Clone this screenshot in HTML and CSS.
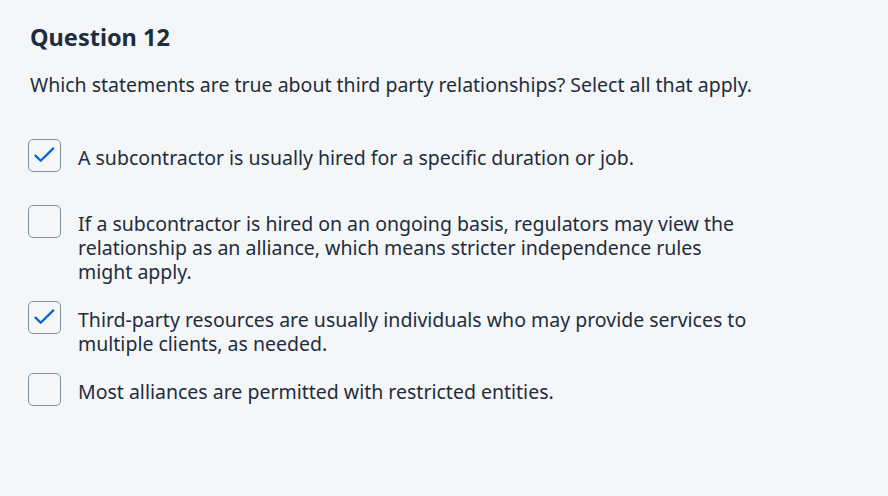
FILE: index.html
```html
<!DOCTYPE html>
<html>
<head>
<meta charset="utf-8">
<link rel="stylesheet" href="styles.css">
</head>
<body>
<main class="question">
  <h1 class="title">Question 12</h1>
  <p class="prompt">Which statements are true about third party relationships? Select all that apply.</p>
  <ul class="options">
    <li class="option">
      <span class="box checked"><svg viewBox="0 0 31 31" width="31" height="31"><path d="M6.5 15.6L11.7 20.8L24.3 8.4" fill="none" stroke="#0064d9" stroke-width="2.2" stroke-linecap="round" stroke-linejoin="round"/></svg></span>
      <span class="label">A subcontractor is usually hired for a specific duration or job.</span>
    </li>
    <li class="option">
      <span class="box"></span>
      <span class="label">If a subcontractor is hired on an ongoing basis, regulators may view the relationship as an alliance, which means stricter independence rules might apply.</span>
    </li>
    <li class="option">
      <span class="box checked"><svg viewBox="0 0 31 31" width="31" height="31"><path d="M6.5 15.6L11.7 20.8L24.3 8.4" fill="none" stroke="#0064d9" stroke-width="2.2" stroke-linecap="round" stroke-linejoin="round"/></svg></span>
      <span class="label">Third-party resources are usually individuals who may provide services to multiple clients, as needed.</span>
    </li>
    <li class="option">
      <span class="box"></span>
      <span class="label">Most alliances are permitted with restricted entities.</span>
    </li>
  </ul>
</main>
</body>
</html>
```
FILE: styles.css
```css
html, body {
  margin: 0;
  padding: 0;
  background: #f5f6f7;
}
body {
  font-family: "Noto Sans", "Open Sans", sans-serif;
  color: #1d2d3e;
}
.question {
  padding: 23px 30px 0 28px;
}
.title {
  margin: 0 0 0 2px;
  font-size: 23.5px;
  font-weight: 700;
  line-height: 28px;
}
.prompt {
  margin: 22px 0 0 2px;
  font-size: 19.5px;
  line-height: 24px;
}
.options {
  list-style: none;
  margin: 42px 0 0;
  padding: 0;
  display: flex;
  flex-direction: column;
}
.option {
  display: flex;
  align-items: flex-start;
  gap: 17px;
}
.box {
  flex: none;
  width: 31px;
  height: 31px;
  margin-bottom: 33px;
  border: 1px solid #7f8fa3;
  border-radius: 5px;
  background: #f5f6f7;
}
.box svg {
  display: block;
}
.label {
  font-size: 19.5px;
  line-height: 24px;
  padding: 7px 0 17px;
  max-width: 675px;
}
```
